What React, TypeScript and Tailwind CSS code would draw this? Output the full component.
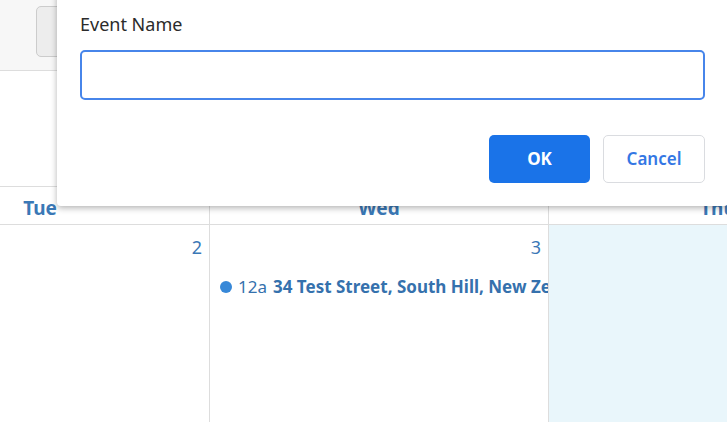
import React from "react"

const days = [
  { name: "Tue", num: "2", today: false },
  { name: "Wed", num: "3", today: false },
  { name: "Thu", num: "4", today: true },
]

function Calendar() {
  return (
    <div className="h-[422px] w-[727px] overflow-hidden bg-white">
      <div className="h-[71px] border-b border-[#dddddd] bg-[#f7f7f7] pl-[36px] pt-[6px]">
        <button className="h-[51px] w-[90px] rounded-[5px] border border-[#cccccc] bg-[#ededed]" />
      </div>
      <div className="h-[115px]" />
      <div className="ml-[-129px] flex">
        {days.map((d) => (
          <div key={d.name} className="w-[339px] shrink-0 border-r border-[#dddddd]">
            <div className="flex h-[39px] items-center justify-center border-y border-[#dddddd] pt-[5px] text-[19px] font-bold text-[#3a78b6]">
              {d.name}
            </div>
            <div className={`h-[200px] ${d.today ? "bg-[#e9f6fb]" : "bg-white"}`}>
              <div className="pr-[7px] pt-[9px] text-right text-[18px] leading-[26px] text-[#3a78b6]">
                {d.num}
              </div>
              {d.name === "Wed" && (
                <div className="mt-[15px] flex items-center gap-[6px] overflow-hidden whitespace-nowrap pl-[10px] text-[17px] leading-[24px] text-[#3571ad]">
                  <span className="h-[12px] w-[12px] shrink-0 rounded-full bg-[#3788d8]" />
                  <span>12a</span>
                  <span className="font-bold">34 Test Street, South Hill, New Zealand</span>
                </div>
              )}
            </div>
          </div>
        ))}
      </div>
    </div>
  )
}

function EventDialog() {
  return (
    <div className="absolute left-[57px] top-[-10px] w-[671px] rounded-[4px] bg-white px-[23px] pb-[23px] pt-[22px] shadow-[0_2px_6px_rgba(0,0,0,0.3)]">
      <label className="block text-[18px] leading-[24px] text-[#2b2b2b]">Event Name</label>
      <input
        type="text"
        className="mt-[14px] block h-[50px] w-full rounded-[5px] border-2 border-[#4785ea] px-3 text-[17px] outline-none"
      />
      <div className="mt-[35px] flex justify-end gap-[13px]">
        <button className="h-[48px] w-[101px] rounded-[5px] bg-[#1a73e8] text-[17px] font-bold text-white">
          OK
        </button>
        <button className="h-[48px] w-[102px] rounded-[5px] border border-[#dadce0] bg-white text-[17px] font-semibold text-[#3477e4]">
          Cancel
        </button>
      </div>
    </div>
  )
}

export default function App() {
  return (
    <div className="relative h-[422px] w-[727px] overflow-hidden" style={{ fontFamily: '"Noto Sans", "Open Sans", sans-serif' }}>
      <Calendar />
      <EventDialog />
    </div>
  )
}
